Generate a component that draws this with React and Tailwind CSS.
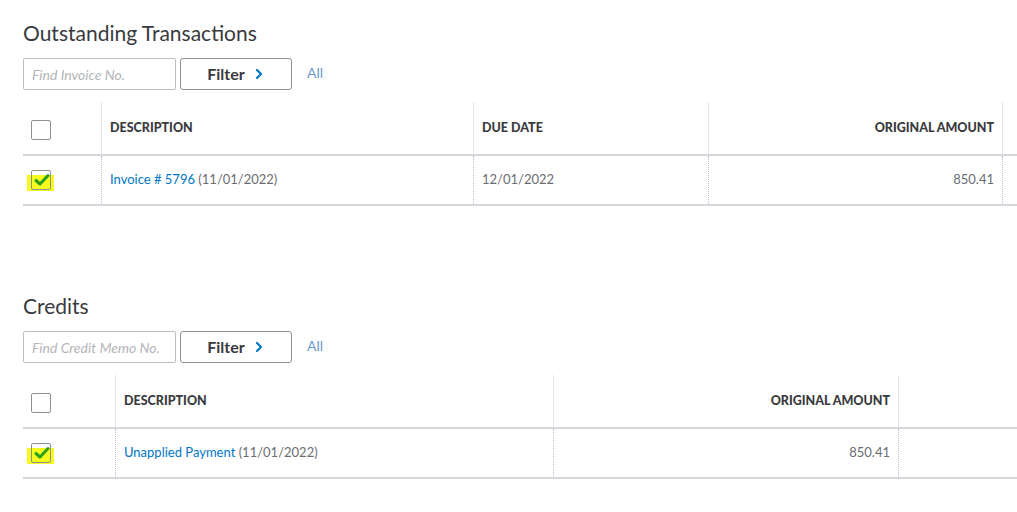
import React from "react";

function Check() {
  return (
    <svg width="16" height="14" viewBox="0 0 16 14" className="absolute left-[3px] top-[3px]">
      <path d="M2 7.5 L6 11 L14 2.5" fill="none" stroke="#2ca01c" strokeWidth="3" strokeLinecap="round" strokeLinejoin="round" />
    </svg>
  );
}

function Box({ checked }) {
  return (
    <div className="relative w-[20px] h-[20px]">
      {checked && <div className="absolute left-[-4px] top-[5px] w-[27px] h-[16px] bg-[#f5fb1e]" />}
      <div className="absolute inset-0 border border-[#8d9096] rounded-[2px]" />
      {checked && <Check />}
    </div>
  );
}

function Toolbar({ placeholder }) {
  return (
    <div className="flex items-center mt-[13px]">
      <input
        placeholder={placeholder}
        className="w-[153px] h-[32px] border border-[#babec5] rounded-[2px] px-[8px] text-[14px] italic placeholder:text-[#b3b5b9] outline-none"
      />
      <button className="ml-[4px] w-[112px] h-[32px] border border-[#8d9096] rounded-[3px] flex items-center justify-center gap-[10px] pr-[2px] text-[16px] font-bold text-[#393a3d]">
        Filter
        <svg width="8" height="12" viewBox="0 0 8 12">
          <path d="M2 2 L6 6 L2 10" fill="none" stroke="#0077c5" strokeWidth="2.2" strokeLinecap="round" strokeLinejoin="round" />
        </svg>
      </button>
      <span className="ml-[15px] text-[14px] text-[#6b9bd0] -mt-[3px]">All</span>
    </div>
  );
}

function Table({ cols, headers, row }) {
  return (
    <div className="mt-[12px] w-[1100px]">
      <div className={`grid ${cols} h-[54px] border-b-2 border-[#d4d7dc]`}>
        <div className="flex items-center pl-[8px] pt-[4px]"><Box /></div>
        {headers.map((h, i) => (
          <div key={i} className={`flex items-center border-l border-[#e3e5e8] px-[8px] text-[12.5px] font-black text-[#393a3d] ${h.right ? "justify-end" : ""}`}>
            {h.label}
          </div>
        ))}
      </div>
      <div className={`grid ${cols} h-[50px] border-b-2 border-[#d4d7dc]`}>
        <div className="flex items-center pl-[8px]"><Box checked /></div>
        {row.map((c, i) => (
          <div key={i} className={`flex items-center border-l border-dotted border-[#babec5] px-[8px] text-[13px] text-[#6b6c72] ${c.right ? "justify-end" : ""}`}>
            {c.content}
          </div>
        ))}
      </div>
    </div>
  );
}

export default function App() {
  return (
    <div className="w-[1017px] h-[512px] overflow-hidden bg-white pl-[23px] pt-[21px]" style={{ fontFamily: "Lato, 'Noto Sans', sans-serif" }}>
      <h2 className="text-[21px] text-[#393a3d] leading-[24px]">Outstanding Transactions</h2>
      <Toolbar placeholder="Find Invoice No." />
      <Table
        cols="grid-cols-[78px_372px_235px_294px_1fr]"
        headers={[{ label: "DESCRIPTION" }, { label: "DUE DATE" }, { label: "ORIGINAL AMOUNT", right: true }, { label: "" }]}
        row={[
          { content: <span><span className="text-[#0077c5]">Invoice # 5796</span> (11/01/2022)</span> },
          { content: "12/01/2022" },
          { content: "850.41", right: true },
          { content: "" },
        ]}
      />
      <h2 className="mt-[88px] text-[21px] text-[#393a3d] leading-[24px]">Credits</h2>
      <Toolbar placeholder="Find Credit Memo No." />
      <Table
        cols="grid-cols-[92px_438px_345px_1fr]"
        headers={[{ label: "DESCRIPTION" }, { label: "ORIGINAL AMOUNT", right: true }, { label: "" }]}
        row={[
          { content: <span><span className="text-[#0077c5]">Unapplied Payment</span> (11/01/2022)</span> },
          { content: "850.41", right: true },
          { content: "" },
        ]}
      />
    </div>
  );
}
